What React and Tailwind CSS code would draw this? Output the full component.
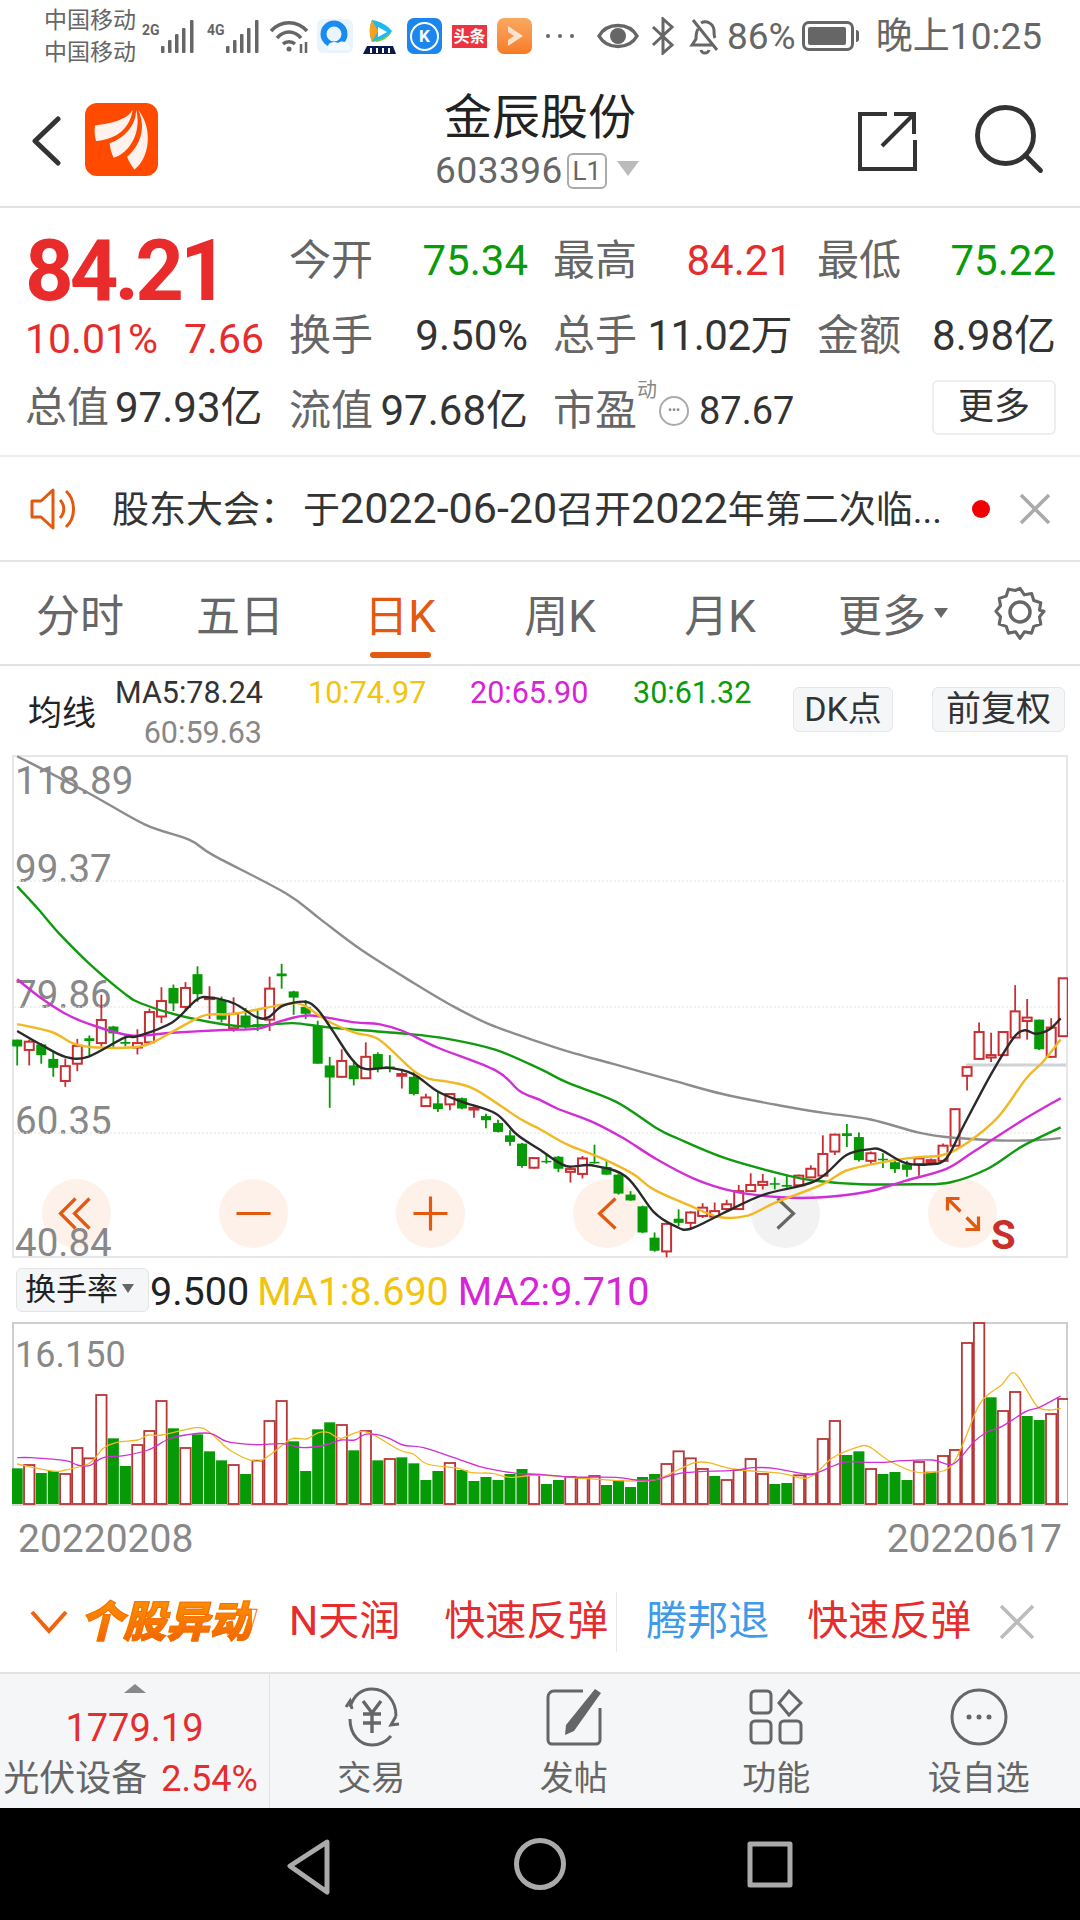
import { Search } from 'lucide-react';

// candle data read off the chart: [hi, top, bottom, lo, colour], y in crop units (1/2.9037 px)
const CANDLES = [
  [870,870,890,945,'g'],[870,876,900,945,'r'],[880,884,915,940,'g'],[905,926,952,978,'g'],[925,947,990,1007,'r'],
  [868,888,940,962,'r'],[858,866,874,915,'g'],[740,813,880,890,'r'],[830,832,852,895,'g'],[855,877,882,890,'g'],
  [840,880,893,913,'r'],[780,790,878,885,'r'],[718,758,803,822,'r'],[710,720,765,787,'g'],[703,720,775,785,'r'],
  [657,680,738,760,'g'],[715,748,752,810,'r'],[745,755,812,820,'g'],[747,795,837,847,'r'],[778,800,832,838,'g'],
  [785,825,830,845,'g'],[687,722,812,845,'r'],[650,678,686,722,'g'],[728,730,748,798,'g'],[755,775,795,810,'g'],
  [815,830,940,940,'g'],[920,945,980,1068,'g'],[898,932,978,980,'r'],[930,945,985,1003,'g'],[878,920,982,984,'r'],
  [907,912,955,965,'g'],[915,948,953,965,'g'],[955,970,975,1012,'r'],[965,978,1028,1032,'g'],[1027,1038,1063,1065,'r'],
  [1022,1055,1072,1080,'g'],[1025,1028,1058,1075,'r'],[1038,1040,1070,1072,'g'],[1060,1068,1073,1097,'r'],[1085,1092,1104,1127,'g'],
  [1103,1112,1138,1140,'g'],[1133,1148,1167,1178,'g'],[1170,1172,1237,1242,'g'],[1212,1214,1242,1244,'r'],[1200,1222,1226,1230,'g'],
  [1208,1210,1245,1255,'g'],[1240,1246,1254,1285,'r'],[1208,1215,1260,1273,'r'],[1175,1225,1228,1230,'g'],[1220,1240,1262,1263,'g'],
  [1260,1262,1317,1320,'g'],[1310,1320,1337,1338,'g'],[1352,1354,1430,1432,'g'],[1430,1445,1483,1486,'g'],[1403,1405,1485,1502,'r'],
  [1363,1390,1402,1412,'g'],[1368,1372,1402,1422,'r'],[1345,1358,1382,1388,'r'],[1343,1368,1384,1386,'r'],[1335,1348,1362,1368,'r'],
  [1292,1310,1362,1365,'r'],[1258,1292,1310,1312,'r'],[1260,1283,1292,1305,'r'],[1270,1287,1290,1305,'g'],[1262,1292,1297,1300,'g'],
  [1262,1265,1293,1298,'r'],[1235,1245,1270,1272,'r'],[1148,1202,1265,1267,'r'],[1143,1146,1195,1205,'r'],[1115,1142,1150,1182,'g'],
  [1140,1153,1220,1224,'g'],[1195,1200,1222,1232,'r'],[1200,1216,1220,1243,'g'],[1212,1226,1246,1257,'g'],[1222,1232,1248,1268,'g'],
  [1212,1215,1232,1265,'r'],[1215,1220,1226,1232,'r'],[1172,1178,1222,1224,'r'],[1070,1072,1178,1180,'r'],[950,950,975,1018,'r'],
  [820,848,926,928,'r'],[850,915,922,935,'r'],[846,848,915,918,'r'],[712,788,864,866,'r'],[752,806,816,870,'r'],
  [812,812,898,900,'g'],[808,835,920,922,'r'],[692,692,860,860,'r'],
];

const VOLS = [
  [535,'g'],[525,'r'],[549,'g'],[543,'g'],[552,'r'],[474,'r'],[505,'r'],[315,'r'],[445,'g'],[528,'g'],[465,'r'],[423,'r'],[333,'r'],[415,'g'],[474,'r'],
  [433,'g'],[484,'g'],[511,'g'],[525,'r'],[552,'g'],[512,'r'],[393,'r'],[333,'r'],[454,'g'],[543,'g'],[418,'g'],[397,'g'],[405,'r'],[481,'g'],[423,'r'],
  [511,'g'],[507,'r'],[502,'g'],[520,'g'],[570,'g'],[543,'g'],[519,'r'],[540,'g'],[573,'g'],[561,'g'],[570,'g'],[552,'g'],[537,'g'],[555,'r'],[582,'g'],
  [570,'g'],[561,'r'],[564,'r'],[558,'r'],[585,'g'],[570,'g'],[591,'g'],[561,'g'],[552,'g'],[522,'r'],[484,'r'],[505,'r'],[537,'r'],[558,'g'],[570,'r'],
  [540,'r'],[507,'r'],[552,'r'],[582,'g'],[579,'g'],[556,'r'],[553,'r'],[447,'r'],[393,'r'],[495,'g'],[484,'g'],[537,'r'],[552,'g'],[546,'g'],[570,'g'],
  [516,'r'],[545,'g'],[498,'r'],[480,'r'],[159,'r'],[99,'r'],[322,'g'],[363,'r'],[306,'r'],[378,'g'],[390,'g'],[372,'r'],[327,'r'],
];

// moving averages, left half then right half of the chart
const MA = {
  gray: [[50,47],[250,150],[420,245],[550,290],[620,335],[830,445],[930,520],[1050,610],[1200,705],[1310,770],[1420,825],[1568,878],[1658,907],[1778,940],[1958,990],[2098,1028],[2268,1062],[2388,1082],[2528,1102],[2668,1140],[2768,1155],[2908,1163],[3008,1162],[3080,1156]],
  green: [[50,425],[110,490],[170,560],[260,650],[360,735],[410,765],[520,800],[680,830],[750,830],[850,822],[960,835],[1180,853],[1300,868],[1440,900],[1568,955],[1648,995],[1788,1050],[1908,1128],[1968,1157],[2108,1215],[2288,1265],[2368,1280],[2498,1290],[2658,1290],[2758,1285],[2868,1245],[2968,1180],[3080,1125]],
  magenta: [[50,695],[120,750],[190,795],[260,825],[380,858],[500,850],[650,842],[750,838],[820,815],[900,800],[1030,820],[1100,825],[1170,845],[1270,893],[1440,960],[1510,1020],[1568,1045],[1618,1070],[1718,1108],[1808,1155],[1908,1218],[2018,1275],[2128,1310],[2268,1328],[2388,1328],[2518,1312],[2628,1280],[2748,1245],[2828,1195],[2968,1105],[3080,1040]],
  yellow: [[50,825],[150,848],[210,880],[270,892],[390,892],[450,875],[540,825],[600,798],[680,795],[830,767],[880,770],[950,815],[1030,850],[1100,870],[1200,960],[1250,985],[1300,992],[1380,1015],[1510,1100],[1568,1130],[1648,1175],[1748,1215],[1838,1260],[1898,1305],[1998,1350],[2088,1385],[2168,1382],[2248,1345],[2388,1290],[2458,1250],[2568,1225],[2658,1212],[2738,1205],[2808,1170],[2898,1095],[2978,985],[3028,935],[3080,870]],
  black: [[50,845],[120,885],[190,920],[255,920],[360,865],[400,860],[500,820],[570,755],[610,748],[680,765],[745,805],[780,805],[820,772],[885,760],[920,780],[960,835],[1020,925],[1060,955],[1130,952],[1200,970],[1270,1020],[1340,1050],[1440,1085],[1500,1145],[1568,1190],[1643,1237],[1718,1235],[1818,1268],[1898,1370],[1958,1410],[2003,1420],[2098,1375],[2218,1320],[2368,1280],[2458,1205],[2528,1188],[2558,1190],[2628,1228],[2698,1232],[2748,1215],[2798,1120],[2878,970],[2943,865],[2976,843],[3008,853],[3048,840],[3080,808]],
};

const VOL_MA = {
  yellow: [[50,522],[150,543],[190,540],[260,520],[300,475],[340,457],[400,450],[430,435],[470,435],[570,413],[610,428],[670,482],[745,514],[790,490],[845,447],[890,447],[925,428],[955,428],[990,445],[1060,425],[1160,480],[1200,492],[1240,522],[1330,535],[1370,548],[1430,550],[1480,562],[1568,555],[1688,565],[1838,573],[1908,568],[1968,540],[2018,518],[2058,518],[2128,537],[2268,550],[2348,563],[2418,503],[2488,472],[2523,470],[2578,510],[2648,543],[2698,548],[2768,520],[2838,355],[2868,315],[2908,285],[2943,248],[2978,295],[3013,350],[3048,360],[3080,355]],
  magenta: [[50,503],[90,503],[190,512],[225,525],[260,527],[300,503],[360,497],[430,480],[490,447],[540,435],[610,430],[660,455],[740,464],[820,461],[880,473],[945,465],[990,450],[1030,450],[1060,433],[1095,434],[1130,445],[1170,465],[1230,473],[1310,500],[1405,533],[1500,550],[1568,553],[1658,561],[1788,562],[1848,570],[1908,568],[1988,548],[2128,541],[2188,533],[2248,535],[2338,552],[2368,550],[2448,517],[2508,517],[2568,517],[2618,512],[2708,510],[2768,522],[2828,455],[2868,425],[2908,410],[2978,365],[3018,352],[3080,318]],
};

const K = 1568 / 540;
const toX = (v) => v / K;
const toY = (v) => 740 + v / K;
const toVY = (v) => 1290 + v / 3;
const candleX = (i) => (50 + 34.9 * i + (i >= 44 ? 1 : 0)) / K;

// smooth path through the points
function smooth(points, fy) {
  const p = points.map(([x, y]) => [toX(x), fy(y)]);
  let d = `M${p[0][0].toFixed(1)} ${p[0][1].toFixed(1)}`;
  for (let i = 0; i < p.length - 1; i++) {
    const a = p[i - 1] || p[i], b = p[i], c = p[i + 1], e = p[i + 2] || c;
    const c1 = [b[0] + (c[0] - a[0]) / 6, b[1] + (c[1] - a[1]) / 6];
    const c2 = [c[0] - (e[0] - b[0]) / 6, c[1] - (e[1] - b[1]) / 6];
    d += `C${c1[0].toFixed(1)} ${c1[1].toFixed(1)} ${c2[0].toFixed(1)} ${c2[1].toFixed(1)} ${c[0].toFixed(1)} ${c[1].toFixed(1)}`;
  }
  return d;
}

function Signal({ label }) {
  return (
    <div className="relative w-[54px] h-[36px]">
      <span className="absolute left-0 top-[5px] text-[14px] leading-none font-bold text-[#666]">{label}</span>
      <svg width="54" height="36" viewBox="0 0 54 36" className="absolute left-0 top-0">
        {[[19, 28], [26, 22], [33, 16], [40, 10], [48, 2]].map(([x, y]) => (
          <rect key={x} x={x} y={y} width="3.500" height={35 - y} rx="1" fill="#666" />
        ))}
      </svg>
    </div>
  );
}

function StatusBar() {
  return (
    <div className="h-[72px] pl-[44px] pr-[38px] flex items-center text-[#666]">
      <div className="w-[98px] text-[23px] leading-[32px] mt-[2px]">
        <div>中国移动</div>
        <div>中国移动</div>
      </div>
      <Signal label="2G" />
      <div className="w-[11px]" />
      <Signal label="4G" />
      <svg width="40" height="36" viewBox="0 0 40 36" className="ml-[8px]" fill="none" stroke="#666" strokeWidth="3.5">
        <path d="M2 13C12 2 28 2 38 13M8 20C15 12 25 12 32 20M14 26C17 23 23 23 26 26" />
        <circle cx="20" cy="31" r="2.5" fill="#666" stroke="none" />
        <path d="M32 26v9M37 24v11" strokeWidth="2.5" />
      </svg>
      <svg width="36" height="34" viewBox="0 0 36 34" className="ml-[8px]">
        <rect width="36" height="34" rx="6" fill="#eaf4fc" />
        <circle cx="17" cy="15" r="10.500" fill="none" stroke="#1a8cf0" strokeWidth="6" />
        <path d="M12 31c-4-6 4-10 9-7 4-4 14 0 12 7z" fill="#f4faff" />
      </svg>
      <svg width="36" height="36" viewBox="0 0 36 36" className="ml-[9px]">
        <path d="M10 2c8 1 16 6 20 11-4 6-12 10-20 11-3-7-3-15 0-22z" fill="#1fb8f0" />
        <path d="M10 2c-3 7-3 15 0 22l6-11z" fill="#f7a21b" />
        <path d="M16 9l9 5-9 5z" fill="#fff" />
        <path d="M14 22c6-1 12-4 16-9-2 5-8 10-16 11z" fill="#6cc644" />
        <path d="M5 28h26l3 8H1z" fill="#0b1a4a" />
        <path d="M9 30v5M15 30v5M21 30v5M27 30v5" stroke="#fff" strokeWidth="2" />
      </svg>
      <div className="ml-[9px] w-[35px] h-[36px] rounded-[7px] bg-[#1a86ee] flex items-center justify-center">
        <div className="w-[29px] h-[29px] rounded-full border-2 border-white text-white text-[17px] font-bold leading-[25px] text-center">K</div>
      </div>
      <div className="ml-[10px] w-[35px] h-[23px] bg-[#ee3340] text-white text-[16px] font-bold leading-[23px] text-center whitespace-nowrap overflow-hidden">头条</div>
      <div className="ml-[10px] w-[35px] h-[36px] rounded-[7px] bg-gradient-to-b from-[#f9a860] to-[#f77c22] flex items-center justify-center">
        <svg width="20" height="24" viewBox="0 0 20 24"><path d="M3 2l15 10-15 10v-6l6-4-6-4z" fill="#fde3cf" /></svg>
      </div>
      <div className="ml-[14px] w-[28px] flex justify-between">
        <span className="w-[4px] h-[4px] bg-[#666] rounded-full" />
        <span className="w-[4px] h-[4px] bg-[#666] rounded-full" />
        <span className="w-[4px] h-[4px] bg-[#666] rounded-full" />
      </div>
      <svg width="42" height="30" viewBox="0 0 42 30" className="ml-[23px]" fill="none" stroke="#666" strokeWidth="3.5">
        <path d="M2 15C10 1 32 1 40 15 32 29 10 29 2 15z" />
        <circle cx="21" cy="15" r="8" fill="#666" stroke="none" />
      </svg>
      <svg width="26" height="38" viewBox="0 0 26 38" className="ml-[11px]" fill="none" stroke="#666" strokeWidth="3">
        <path d="M3 10l19 18-9 8V2l9 8L3 28" />
      </svg>
      <svg width="32" height="38" viewBox="0 0 32 38" className="ml-[13px]" fill="none" stroke="#666" strokeWidth="3">
        <path d="M4 3l24 30M9 12c-2 3-2 8-2 10l-4 6h21M12 6c5-3 12 0 13 7 0 4 0 6 1 8" />
        <path d="M12 33c1 4 7 4 8 0" />
      </svg>
      <span className="ml-[6px] text-[37px] leading-none w-[72px]">86%</span>
      <div className="ml-[3px] flex items-center">
        <div className="w-[52px] h-[30px] border-[3px] border-[#666] rounded-[7px] p-[3px]">
          <div className="w-[38px] h-full bg-[#666] rounded-[2px]" />
        </div>
        <div className="ml-[2px] w-[3px] h-[12px] bg-[#666] rounded-r" />
      </div>
      <span className="ml-auto text-[37px] leading-none whitespace-nowrap">晚上10:25</span>
    </div>
  );
}

function Header() {
  return (
    <div className="relative h-[136px] border-b-2 border-[#e2e2e2]">
      <div className="absolute left-[30px] top-[44px]">
        <svg width="32" height="50" viewBox="0 0 32 50" fill="none" stroke="#333" strokeWidth="5" strokeLinecap="round" strokeLinejoin="round">
          <path d="M28 3L5 25l23 22" />
        </svg>
      </div>
      <svg width="73" height="73" viewBox="45 40 217 217" className="absolute left-[85px] top-[31px]">
        <rect x="45" y="40" width="217" height="217" rx="36" fill="#ff4a00" />
        <path d="M187 60C170 90 125 100 75 107C72 125 74 140 78 153C125 148 175 130 187 60Z" fill="#fff" opacity=".92" />
        <path d="M197 60C196 110 160 145 118 160C120 175 124 190 130 203C175 190 215 130 197 60Z" fill="#fff" opacity=".92" />
        <path d="M203 60C230 120 205 170 170 200C176 215 184 228 192 238C235 205 250 120 203 60Z" fill="#fff" opacity=".92" />
      </svg>
      <div className="flex flex-col items-center pt-[17px]">
        <div className="text-[48px] leading-[58px] text-[#222]">金辰股份</div>
        <div className="flex items-center h-[44px] mt-[2px] -ml-[6px] text-[#666]">
          <span className="text-[37px] tracking-[0.5px]">603396</span>
          <span className="ml-[4px] w-[40px] h-[36px] border-2 border-[#aaa] rounded-[6px] text-[26px] leading-[32px] text-center">L1</span>
          <span className="ml-[10px] w-0 h-0 border-l-[11px] border-r-[11px] border-t-[15px] border-l-transparent border-r-transparent border-t-[#bbb] mb-[6px]" />
        </div>
      </div>
      <div className="absolute left-[856px] top-[38px]">
        <svg width="62" height="62" viewBox="0 0 62 62" fill="none" stroke="#333" strokeWidth="4">
          <path d="M31 4H4v55h55V30M26 36L57 5M38 4h20v20" />
        </svg>
      </div>
      <div className="absolute left-[967px] top-[25px]">
        <Search size={84} strokeWidth={1.4} color="#333" />
      </div>
    </div>
  );
}

function Cell({ label, value, color = 'text-[#333]' }) {
  return (
    <div className="flex justify-between items-center w-[239px] h-[50px] whitespace-nowrap">
      <span className="text-[#666]">{label}</span>
      <span className={color}>{value}</span>
    </div>
  );
}

function Quote() {
  const red = 'text-[#e62d2d]';
  const green = 'text-[#0a9a0a]';
  return (
    <div className="h-[249px] border-b-2 border-[#eeeeee] pl-[25px] flex text-[42px] leading-[50px]">
      <div className="w-[264px] pt-[19px]">
        <div className="text-[85px] leading-[88px] font-bold text-[#ea2b2b] tracking-[-4px]">84.21</div>
        <div className="flex justify-between w-[239px] mt-[2px] text-[41px] leading-[44px] text-[#e62d2d]">
          <span>10.01%</span>
          <span>7.66</span>
        </div>
        <div className="mt-[22px] flex whitespace-nowrap text-[42px] leading-[50px]">
          <span className="text-[#666]">总值</span>
          <span className="ml-[6px] text-[#333]">97.93亿</span>
        </div>
      </div>
      <div className="pt-[28px]">
        <div className="grid grid-cols-[239px_239px_239px] gap-x-[25px] gap-y-[25px]">
          <Cell label="今开" value="75.34" color={green} />
          <Cell label="最高" value="84.21" color={red} />
          <Cell label="最低" value="75.22" color={green} />
          <Cell label="换手" value="9.50%" />
          <div className="flex justify-between items-center w-[239px] h-[50px] whitespace-nowrap">
            <span className="text-[#666]">总手</span>
            <span className="text-[#333] tracking-[-0.5px]">11.02万</span>
          </div>
          <Cell label="金额" value="8.98亿" />
          <Cell label="流值" value="97.68亿" />
          <div className="flex items-center w-[239px] h-[50px] relative whitespace-nowrap">
            <span className="text-[#666] shrink-0">市盈</span>
            <span className="absolute left-[84px] top-[-6px] text-[20px] leading-[20px] text-[#888]">动</span>
            <span className="ml-[22px] w-[30px] h-[30px] rounded-full border-2 border-[#aaa] text-[#888] text-[12px] leading-[24px] text-center shrink-0">•••</span>
            <span className="ml-[10px] text-[38px] text-[#333]">87.67</span>
          </div>
          <div className="flex justify-end items-center h-[50px]">
            <div className="w-[124px] h-[55px] border-2 border-[#eee] rounded-[6px] text-[36px] leading-[50px] text-center text-[#333] -mt-[7px]">更多</div>
          </div>
        </div>
      </div>
    </div>
  );
}

function Notice() {
  return (
    <div className="h-[105px] border-b-2 border-[#e4e4e4] pl-[30px] flex items-center">
      <svg width="50" height="44" viewBox="0 0 50 44" fill="none" stroke="#e2590f" strokeWidth="3" strokeLinejoin="round">
        <path d="M2 14h9L23 3v38L11 30H2z" />
        <path d="M30 13c5 5 5 13 0 18M36 4c10 9 10 27 0 36" />
      </svg>
      <span className="ml-[32px] text-[37px] text-[#333] whitespace-nowrap">
        股东大会：<span className="ml-[6px]">于</span><span className="text-[43px]">2022-06-20</span>召开<span className="text-[43px]">2022</span>年第二次临...
      </span>
      <span className="absolute left-[972px] w-[18px] h-[18px] rounded-full bg-[#f00000]" />
      <svg width="32" height="32" viewBox="0 0 32 32" className="absolute left-[1019px]" stroke="#aaa" strokeWidth="3.5">
        <path d="M2 2l28 28M30 2L2 30" />
      </svg>
    </div>
  );
}

function Tabs() {
  const tabs = ['分时', '五日', '日K', '周K', '月K'];
  return (
    <div className="h-[104px] border-b-2 border-[#e2e2e2] flex items-center text-[44px] text-[#666]">
      {tabs.map((t) => (
        <div key={t} className={`relative w-[160px] text-center h-[102px] leading-[110px] ${t === '日K' ? 'text-[#e2590f]' : ''}`}>
          {t}
          {t === '日K' && <span className="absolute left-[50px] top-[90px] w-[61px] h-[6px] rounded-full bg-[#e2590f]" />}
        </div>
      ))}
      <div className="w-[160px] h-[102px] leading-[110px] flex justify-center pl-[26px]">
        更多
        <span className="ml-[8px] mt-[46px] w-0 h-0 border-l-[7px] border-r-[7px] border-t-[10px] border-l-transparent border-r-transparent border-t-[#666]" />
      </div>
      <svg width="60" height="60" viewBox="0 0 24 24" className="ml-[30px] -mt-[2px]" fill="none" stroke="#666" strokeWidth="1.4" strokeLinejoin="round">
        <path d="M12 1.5l2 3 3.3-.6 1 3.2 3.2 1-.6 3.4L23 12l-2.100 2.500.6 3.400-3.200 1-1 3.100-3.300-.6-2 3-2-3-3.300.6-1-3.100-3.200-1 .6-3.400L1 12l2.100-2.500-.6-3.400 3.200-1 1-3.200 3.300.6z" transform="translate(1.5 1.2) scale(.875)" />
        <circle cx="12" cy="12" r="4" />
      </svg>
    </div>
  );
}

function MaRow() {
  return (
    <div className="h-[89px] flex items-center pl-[28px] relative">
      <span className="text-[34px] text-[#222] w-[87px] mt-[6px]">均线</span>
      <div className="grid grid-cols-[147px_116px_117px_118px] gap-x-[46px] text-[30.5px] leading-[40px] mt-[4px] whitespace-nowrap">
        <span className="text-[#333]">MA5:78.24</span>
        <span className="text-[#f2c40d]">10:74.97</span>
        <span className="text-[#d624d6]">20:65.90</span>
        <span className="text-[#0a9a0a]">30:61.32</span>
        <span className="text-[#888] text-right">60:59.63</span>
      </div>
      <div className="absolute left-[793px] top-[21px] w-[100px] h-[45px] bg-[#f5f6f8] border border-[#e6e6e6] rounded-[6px] text-[34px] leading-[43px] text-center text-[#333]">DK点</div>
      <div className="absolute left-[932px] top-[21px] w-[133px] h-[45px] bg-[#f5f6f8] border border-[#e6e6e6] rounded-[6px] text-[35px] leading-[43px] text-center text-[#333]">前复权</div>
    </div>
  );
}

const ROUND = [
  { x: 76.5, bg: 'bg-[#fdf1ea]', d: 'M-1 -15L-16 0L-1 15M13 -15L-2 0L13 15', stroke: '#e2590f' },
  { x: 253.5, bg: 'bg-[#fdf1ea]', d: 'M-17 0H17', stroke: '#e2590f' },
  { x: 430.5, bg: 'bg-[#fdf1ea]', d: 'M-17 0H17M0 -17V17', stroke: '#e2590f' },
  { x: 607, bg: 'bg-[#fdf1ea]', d: 'M8 -15L-8 0L8 15', stroke: '#e2590f' },
  { x: 785, bg: 'bg-[#f2f2f2]', d: 'M-8 -15L8 0L-8 15', stroke: '#666' },
  { x: 962, bg: 'bg-[#fdf1ea]', d: 'M-2 -2L-15 -15M-15 -3V-15H-3M4 4L16 16M16 3V16H3', stroke: '#e2590f' },
];

const PRICES = [['118.89', 781], ['99.37', 869], ['79.86', 995], ['60.35', 1121], ['40.84', 1243]];

function MainChart() {
  return (
    <div className="relative ml-[12px] w-[1056px] h-[503px] border-2 border-[#e6e6e6]">
      {ROUND.map((b) => (
        <div key={b.x} className={`absolute w-[69px] h-[69px] rounded-full ${b.bg}`} style={{ left: b.x - 48.5, top: 1213 - 757 - 34.5 }}>
          <svg width="69" height="69" viewBox="-34.5 -34.5 69 69" fill="none" stroke={b.stroke} strokeWidth="3.2">
            <path d={b.d} />
          </svg>
        </div>
      ))}
      {PRICES.map(([p, y]) => (
        <div key={p} className="absolute left-[1px] text-[38.5px] leading-[44px] text-[#888]" style={{ top: y - 757 - 22 }}>{p}</div>
      ))}
      <svg width="1056" height="503" viewBox="12 755 1056 503" className="absolute -left-[2px] -top-[2px]">
        {[881, 1007, 1133].map((y) => (
          <line key={y} x1="14" x2="1066" y1={y} y2={y} stroke="#e2e2e2" strokeWidth="1" strokeDasharray="2 2" />
        ))}
        <rect x="966" y="1063.500" width="100" height="3" fill="#cfd2d6" />
        {CANDLES.map(([hi, top, bot, lo, c], i) => {
          const x = candleX(i);
          const color = c === 'r' ? '#c92e32' : '#069a06';
          return (
            <g key={i}>
              <line x1={x} x2={x} y1={toY(hi)} y2={toY(lo)} stroke={color} strokeWidth="1.8" />
              {c === 'r'
                ? <rect x={x - 4.5} y={toY(top)} width="9" height={Math.max((bot - top) / K, 1.5)} fill="#fff" stroke={color} strokeWidth="2" />
                : <rect x={x - 5} y={toY(top)} width="10" height={Math.max((bot - top) / K, 1.5)} fill={color} />}
            </g>
          );
        })}
        <g fill="none" strokeWidth="2.4">
          <path d={smooth(MA.gray, toY)} stroke="#8c8c8c" />
          <path d={smooth(MA.green, toY)} stroke="#109a10" />
          <path d={smooth(MA.magenta, toY)} stroke="#d22ed6" />
          <path d={smooth(MA.yellow, toY)} stroke="#f2b824" />
          <path d={smooth(MA.black, toY)} stroke="#2a2a2a" />
        </g>
      </svg>
      <span className="absolute left-[977px] top-[456px] text-[40px] leading-[46px] font-bold text-[#c9302c]">S</span>
    </div>
  );
}

function VolRow() {
  return (
    <div className="h-[64px] flex items-center pl-[16px] text-[39.5px]">
      <div className="w-[133px] h-[44px] bg-[#f5f6f8] border border-[#e4e4e4] rounded-[6px] flex items-center pl-[8px] text-[31px] text-[#222]">
        换手率
        <span className="ml-[4px] mb-[4px] w-0 h-0 border-l-[6px] border-r-[6px] border-t-[9px] border-l-transparent border-r-transparent border-t-[#666]" />
      </div>
      <span className="ml-[1px] mt-[3px] text-[#222]">9.500</span>
      <span className="ml-[8px] mt-[3px] text-[#f2c40d]">MA1:8.690</span>
      <span className="ml-[9px] mt-[3px] text-[#d624d6]">MA2:9.710</span>
    </div>
  );
}

function VolChart() {
  return (
    <div className="relative ml-[12px] w-[1056px] h-[184px] border-2 border-[#cfcfcf] border-b-[#d8d8d8]">
      <div className="absolute left-[1px] top-[9px] text-[36px] leading-[44px] text-[#888]">16.150</div>
      <svg width="1056" height="184" viewBox="12 1322 1056 184" className="absolute -left-[2px] -top-[2px]">
        {VOLS.map(([top, c], i) => c === 'g' && (
          <rect key={i} x={candleX(i) - 5.5} y={toVY(top)} width="11" height={(642 - top) / 3} fill="#069a06" />
        ))}
        {VOLS.map(([top, c], i) => c === 'r' && (
          <rect key={i} x={candleX(i) - 5.2} y={toVY(top)} width="10.400" height={(642 - top) / 3} fill="#fff" stroke="#b83636" strokeWidth="1.8" />
        ))}
        <g fill="none" strokeWidth="1.3">
          <path d={smooth(VOL_MA.yellow, toVY)} stroke="#f2b824" />
          <path d={smooth(VOL_MA.magenta, toVY)} stroke="#d22ed6" />
        </g>
      </svg>
    </div>
  );
}

function NewsBar() {
  return (
    <div className="h-[100px] border-b-2 border-[#e2e2e2] box-content flex items-center text-[41px] relative">
      <svg width="38" height="24" viewBox="0 0 38 24" className="ml-[30px]" fill="none" stroke="#f0620f" strokeWidth="4">
        <path d="M2 2l17 19L36 2" />
      </svg>
      <span className="ml-[12px] text-[43px] font-black italic whitespace-nowrap text-transparent bg-clip-text bg-gradient-to-b from-[#ff9a00] to-[#ee5500] [-webkit-text-stroke:1px_#f57000]">个股异动</span>
      <span className="ml-[37px] text-[#e62d2d] whitespace-nowrap">N天润</span>
      <span className="ml-[44px] text-[#e62d2d] whitespace-nowrap">快速反弹</span>
      <span className="ml-[8px] w-px h-[60px] bg-[#e8e8e8]" />
      <span className="ml-[29px] text-[#3f9ae8] whitespace-nowrap">腾邦退</span>
      <span className="ml-[38px] text-[#e62d2d] whitespace-nowrap">快速反弹</span>
      <svg width="36" height="36" viewBox="0 0 36 36" className="ml-[28px]" stroke="#bbb" strokeWidth="3.5">
        <path d="M2 2l32 32M34 2L2 34" />
      </svg>
    </div>
  );
}

function BottomTabs() {
  const stroke = { fill: 'none', stroke: '#666', strokeWidth: 3 };
  const items = [
    {
      label: '交易',
      icon: (
        <svg width="66" height="60" viewBox="0 0 66 60" {...stroke}>
          <path d="M12 20C16 8 24 2 34 2c14 0 24 12 24 27M8 20l4-6 2 8M12 32c0 16 10 26 22 26 8 0 14-3 19-9M58 29l-5 9 8-1" />
          <path d="M25 14l9 12 9-12M34 26v20M25 27h18M25 36h18" strokeWidth="3.4" />
        </svg>
      ),
    },
    {
      label: '发帖',
      icon: (
        <svg width="58" height="58" viewBox="0 0 58 58" {...stroke}>
          <path d="M38 3H9a6 6 0 0 0-6 6v43a4 4 0 0 0 4 4h44a4 4 0 0 0 4-4V20" />
          <path d="M19 38L48 2l6 4-27 38-9 4z" fill="#666" stroke="none" transform="translate(2 -1)" />
        </svg>
      ),
    },
    {
      label: '功能',
      icon: (
        <svg width="54" height="56" viewBox="0 0 54 56" {...stroke}>
          <rect x="2" y="2" width="20" height="22" rx="4" />
          <path d="M40 2l12 12-12 12-10-12z" />
          <rect x="2" y="32" width="20" height="22" rx="4" />
          <rect x="31" y="32" width="21" height="22" rx="4" />
        </svg>
      ),
    },
    {
      label: '设自选',
      icon: (
        <svg width="58" height="58" viewBox="0 0 58 58" {...stroke}>
          <circle cx="29" cy="29" r="27" />
          <circle cx="19" cy="29" r="2.500" fill="#666" stroke="none" />
          <circle cx="29" cy="29" r="2.500" fill="#666" stroke="none" />
          <circle cx="39" cy="29" r="2.500" fill="#666" stroke="none" />
        </svg>
      ),
    },
  ];
  return (
    <div className="h-[134px] bg-[#f5f6f8] flex">
      <div className="w-[270px] border-r border-[#e2e2e2] flex flex-col items-center">
        <span className="mt-[10px] w-0 h-0 border-l-[11px] border-r-[11px] border-b-[9px] border-l-transparent border-r-transparent border-b-[#888]" />
        <div className="mt-[12px] text-[38px] leading-[46px] text-[#e62d2d]">1779.19</div>
        <div className="mt-[3px] -ml-[8px] flex whitespace-nowrap text-[36px] leading-[50px]">
          <span className="text-[#666]">光伏设备</span>
          <span className="ml-[14px] text-[#e62d2d]">2.54%</span>
        </div>
      </div>
      {items.map((it) => (
        <div key={it.label} className="w-[202.5px] flex flex-col items-center">
          <div className="h-[70px] mt-[8px] flex items-center justify-center">{it.icon}</div>
          <span className="mt-[3px] text-[34px] leading-[46px] text-[#666]">{it.label}</span>
        </div>
      ))}
    </div>
  );
}

function NavBar() {
  return (
    <div className="h-[114px] bg-black relative">
      <svg width="1080" height="112" viewBox="0 0 1080 112" fill="none" stroke="#aaaaaa" strokeWidth="5" strokeLinejoin="round">
        <path d="M327 34L290 58l37 26z" />
        <circle cx="540" cy="56" r="23.500" />
        <rect x="750" y="36" width="40" height="41" />
      </svg>
    </div>
  );
}

export default function App() {
  return (
    <div className="relative w-[1080px] h-[1920px] overflow-hidden bg-white font-[Roboto,'Noto_Sans_CJK_SC',sans-serif]">
      <StatusBar />
      <Header />
      <Quote />
      <Notice />
      <Tabs />
      <MaRow />
      <MainChart />
      <VolRow />
      <VolChart />
      <div className="h-[66px] px-[18px] flex items-center justify-between text-[39px] text-[#888]">
        <span>20220208</span>
        <span>20220617</span>
      </div>
      <NewsBar />
      <BottomTabs />
      <NavBar />
    </div>
  );
}
